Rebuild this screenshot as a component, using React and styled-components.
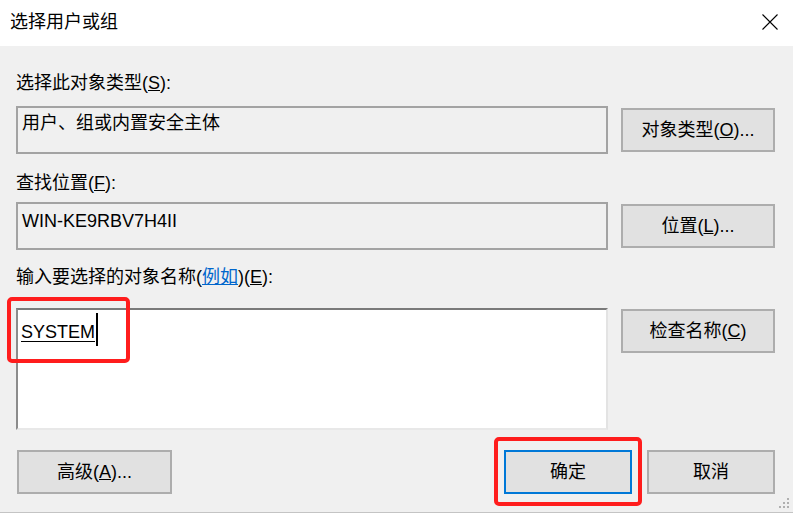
import styled, { createGlobalStyle } from "styled-components";

const GlobalStyle = createGlobalStyle`
  html, body {
    margin: 0;
    padding: 0;
    background: #f0f0f0;
  }
  * {
    box-sizing: border-box;
  }
`;

const Window = styled.div`
  width: 793px;
  height: 513px;
  display: flex;
  flex-direction: column;
  background: #f0f0f0;
  border-bottom: 1px solid #c4c4c4;
  font-family: "Liberation Sans", "Noto Sans CJK SC", sans-serif;
  color: #000;
  position: relative;
`;

const TitleBar = styled.div`
  height: 46px;
  flex-shrink: 0;
  background: #fff;
  display: flex;
  align-items: center;
  justify-content: space-between;
  padding: 0 15px 2px 10px;
`;

const Title = styled.div`
  font-size: 18px;
  line-height: 22px;
`;

const Body = styled.div`
  flex: 1;
  display: flex;
  flex-direction: column;
  padding: 26px 18px 0 16px;
`;

const Label = styled.div`
  font-size: 18px;
  line-height: 22px;
  height: 22px;
  margin-bottom: ${(p) => p.$gap}px;
  white-space: nowrap;
`;

const Link = styled.span`
  color: #0066cc;
  text-decoration: underline;
`;

const Row = styled.div`
  display: grid;
  grid-template-columns: 592px 154px;
  column-gap: 13px;
  align-items: ${(p) => p.$align || "center"};
  margin-bottom: ${(p) => p.$gap}px;
`;

const ReadBox = styled.div`
  height: 48px;
  border: 2px solid #a3a3a3;
  background: #f0f0f0;
  padding: ${(p) => p.$pt}px 4px 0;
  font-size: 18px;
  line-height: 22px;
  white-space: nowrap;
`;

const FieldWrap = styled.div`
  position: relative;
`;

const InputArea = styled.div`
  height: 122px;
  background: #fff;
  border-top: 2px solid #7a7a7a;
  border-left: 2px solid #8c8c8c;
  border-right: 2px solid #e3e3e3;
  border-bottom: 2px solid #e8e8e8;
  padding: 3px 3px 0;
  font-size: 18px;
  line-height: 22px;
  display: flex;
  align-items: flex-start;
`;

const Resolved = styled.span`
  text-decoration: underline;
  text-underline-offset: 3px;
  height: 34px;
  display: inline-flex;
  align-items: center;
  padding-top: 4px;
`;

const Caret = styled.span`
  display: inline-block;
  width: 2px;
  height: 33px;
  background: #000;
  margin-left: 1px;
`;

const Annotation = styled.div`
  position: absolute;
  left: -9px;
  top: -11px;
  width: 123px;
  height: 66px;
  border: 4px solid #ff1d1d;
  border-radius: 5px;
  pointer-events: none;
`;

const Button = styled.button`
  height: 44px;
  width: ${(p) => p.$w || 154}px;
  margin-top: ${(p) => p.$mt || 0}px;
  background: #e1e1e1;
  border: 2px solid ${(p) => (p.$default ? "#0078d7" : "#adadad")};
  font-family: inherit;
  font-size: 18px;
  line-height: 22px;
  color: #000;
  padding: 0;
  position: relative;
  cursor: default;

  ${(p) =>
    p.$marked &&
    `
    &::after {
      content: "";
      position: absolute;
      left: -12px;
      right: -12px;
      top: -15px;
      bottom: -14px;
      border: 4px solid #ff1d1d;
      border-radius: 5px;
    }
  `}
`;

const Footer = styled.div`
  display: flex;
  align-items: center;
  padding-left: 1px;
`;

const Spacer = styled.div`
  flex: 1;
`;

const ButtonPair = styled.div`
  display: flex;
  gap: 15px;
`;

const Grip = styled.svg`
  position: absolute;
  right: 3px;
  bottom: 3px;
`;

function CloseIcon() {
  return (
    <svg width="16" height="16" viewBox="0 0 16 16">
      <path d="M0.5 0.5 L15.5 15.5 M15.5 0.5 L0.5 15.5" stroke="#000" strokeWidth="1.1" fill="none" />
    </svg>
  );
}

export default function App() {
  return (
    <>
      <GlobalStyle />
      <Window>
        <TitleBar>
          <Title>选择用户或组</Title>
          <CloseIcon />
        </TitleBar>
        <Body>
          <Label $gap={12}>选择此对象类型(<u>S</u>):</Label>
          <Row $gap={18}>
            <ReadBox $pt={4}>用户、组或内置安全主体</ReadBox>
            <Button>对象类型(<u>O</u>)...</Button>
          </Row>

          <Label $gap={8}>查找位置(<u>F</u>):</Label>
          <Row $gap={16}>
            <ReadBox $pt={6}>WIN-KE9RBV7H4II</ReadBox>
            <Button>位置(<u>L</u>)...</Button>
          </Row>

          <Label $gap={20}>
            输入要选择的对象名称(<Link>例如</Link>)(<u>E</u>):
          </Label>
          <Row $gap={20} $align="start">
            <FieldWrap>
              <InputArea>
                <Resolved>SYSTEM</Resolved>
                <Caret />
              </InputArea>
              <Annotation />
            </FieldWrap>
            <Button $mt={1}>检查名称(<u>C</u>)</Button>
          </Row>

          <Footer>
            <Button $w={155}>高级(<u>A</u>)...</Button>
            <Spacer />
            <ButtonPair>
              <Button $w={128} $default $marked>确定</Button>
              <Button $w={128}>取消</Button>
            </ButtonPair>
          </Footer>
        </Body>
        <Grip width="13" height="13" viewBox="0 0 13 13">
          <g fill="#b0b0b0">
            <rect x="10" y="2" width="2" height="2" />
            <rect x="6" y="6" width="2" height="2" />
            <rect x="10" y="6" width="2" height="2" />
            <rect x="2" y="10" width="2" height="2" />
            <rect x="6" y="10" width="2" height="2" />
            <rect x="10" y="10" width="2" height="2" />
          </g>
        </Grip>
      </Window>
    </>
  );
}
